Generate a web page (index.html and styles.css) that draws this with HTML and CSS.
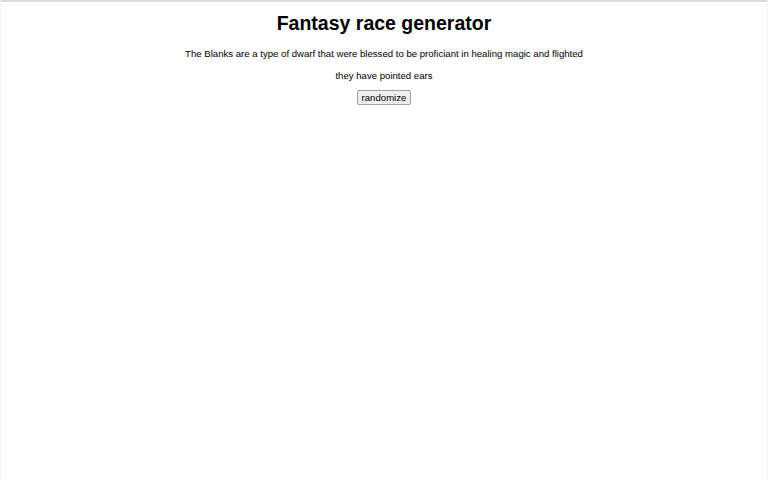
FILE: index.html
```html
<!DOCTYPE html>
<html>
<head>
  <title>Fantasy race generator</title>
  <link rel="stylesheet" href="styles.css">
</head>
<body>
  <div class="page">
    <h1>Fantasy race generator</h1>
    <p id="race">The Blanks are a type of dwarf that were blessed to be proficiant in healing magic and flighted</p>
    <p id="trait">they have pointed ears</p>
    <button id="randomize">randomize</button>
  </div>
</body>
</html>
```

FILE: styles.css
```css
html, body {
  margin: 0;
  height: 100%;
  background: #ffffff;
}

body {
  font-family: "Liberation Sans", Arial, sans-serif;
  color: #000;
}

.page {
  box-sizing: border-box;
  height: 100%;
  border-top: 2px solid #dcdcdc;
  border-left: 1px solid #f0f0f0;
  border-right: 1px solid #f0f0f0;
  text-align: center;
  padding-top: 10px;
}

h1 {
  font-size: 19.5px;
  font-weight: bold;
  line-height: 22px;
  margin: 0 0 14px 0;
}

p {
  font-size: 9.6px;
  line-height: 12px;
  margin: 0 0 10px 0;
}

#trait {
  margin-bottom: 8px;
}

button {
  display: block;
  margin: 0 auto;
  font-family: "Liberation Sans", Arial, sans-serif;
  font-size: 9.6px;
  line-height: 11px;
  padding: 1px 4px;
  border: 1px solid #a0a0a0;
  border-radius: 2px;
  background: #efefef;
  color: #000;
}
```
